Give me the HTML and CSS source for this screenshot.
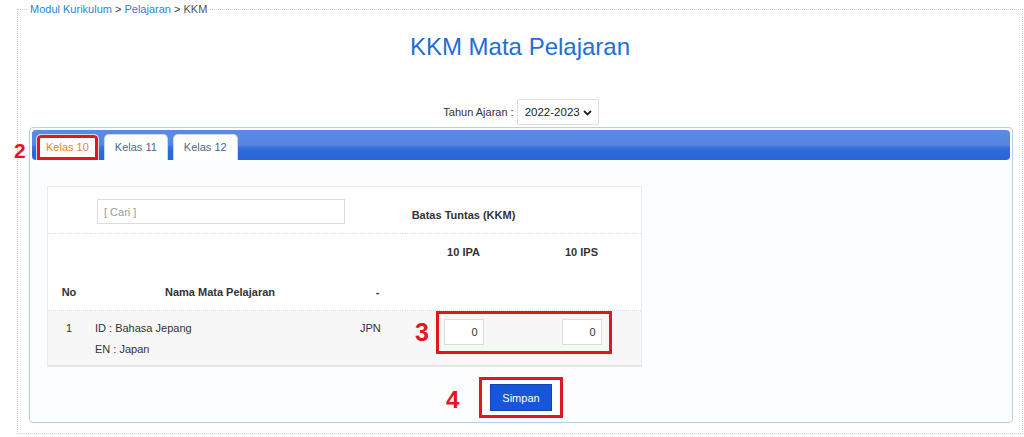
FILE: index.html
```html
<!DOCTYPE html>
<html lang="id">
<head>
<meta charset="utf-8">
<title>KKM Mata Pelajaran</title>
<link rel="stylesheet" href="styles.css">
</head>
<body>
<fieldset class="frame">
  <legend class="crumbs"><a class="link">Modul Kurikulum</a> &gt; <a class="link">Pelajaran</a> &gt; <span class="cur">KKM</span></legend>
  <h1 class="title">KKM Mata Pelajaran</h1>
  <div class="year-row">
    <label class="year-label">Tahun Ajaran :</label>
    <div class="select-wrap">
      <select class="year"><option>2022-2023</option></select>
      <svg class="chev" width="9" height="6" viewBox="0 0 9 6"><path d="M1 1 L4.5 4.5 L8 1" fill="none" stroke="#222" stroke-width="1.8"/></svg>
    </div>
  </div>
  <div class="tabs">
    <div class="tabbar">
      <span class="tab active hl">Kelas 10</span>
      <span class="tab">Kelas 11</span>
      <span class="tab">Kelas 12</span>
    </div>
    <span class="anno anno-2">2</span>
    <div class="panel">
      <div class="grid-wrap">
        <table class="grid">
          <colgroup><col class="c1"><col class="c2"><col class="c3"><col class="c4"><col class="c5"></colgroup>
          <tr class="r1">
            <td></td>
            <td><input class="search" type="text" placeholder="[ Cari ]"></td>
            <td></td>
            <td class="th kkm">Batas Tuntas (KKM)</td>
            <td></td>
          </tr>
          <tr class="r2">
            <td></td><td></td><td></td>
            <td class="th center">10 IPA</td>
            <td class="th center">10 IPS</td>
          </tr>
          <tr class="r3">
            <td class="th center">No</td>
            <td class="th center">Nama Mata Pelajaran</td>
            <td class="th center dash">-</td>
            <td></td><td></td>
          </tr>
          <tr class="r4">
            <td class="center">1</td>
            <td class="name">ID : Bahasa Jepang<br>EN : Japan</td>
            <td class="code">JPN</td>
            <td class="center"><input class="score" type="text" value="0"></td>
            <td class="center"><input class="score" type="text" value="0"></td>
          </tr>
        </table>
        <div class="hl-box"></div>
        <span class="anno anno-3">3</span>
      </div>
      <div class="actions">
        <div class="btn-box">
          <span class="anno anno-4">4</span>
          <button class="btn" type="button">Simpan</button>
        </div>
      </div>
    </div>
  </div>
</fieldset>
</body>
</html>
```
FILE: styles.css
```css
html, body {
  margin: 0;
  padding: 0;
  background: #ffffff;
}
body {
  font-family: "Liberation Sans", Arial, sans-serif;
  font-size: 11px;
  color: #333;
}
.frame {
  margin: 3px 1px 0 17px;
  padding: 0 0 10px 0;
  border: 1px dotted #cfcfcf;
  min-inline-size: 0;
}
.crumbs {
  margin-left: 9px;
  padding: 0 3px 0 3px;
  font-size: 11px;
  line-height: 13px;
}
.crumbs .link {
  color: #2f7fdc;
  text-decoration: none;
}
.crumbs .cur {
  color: #555;
}
.title {
  margin: 17px 0 0 0;
  text-align: center;
  font-weight: normal;
  font-size: 24px;
  line-height: 28px;
  color: #1c6fd3;
}
.year-row {
  margin-top: 38px;
  display: flex;
  justify-content: center;
  align-items: center;
  gap: 3px;
  height: 26px;
  padding-left: 2px;
}
.year-label {
  color: #333;
  font-size: 11px;
}
.select-wrap {
  position: relative;
  width: 82px;
  height: 26px;
}
.year {
  appearance: none;
  -webkit-appearance: none;
  width: 82px;
  height: 26px;
  box-sizing: border-box;
  border: 1px solid #dedede;
  border-radius: 2px;
  background: #fff;
  padding: 0 0 0 7px;
  font-family: "Liberation Sans", Arial, sans-serif;
  font-size: 11.5px;
  color: #222;
}
.chev {
  position: absolute;
  right: 7px;
  top: 11px;
  pointer-events: none;
}
.tabs {
  position: relative;
  margin: 2px 9px 0 11px;
  border: 1px solid #b3d3ec;
  border-radius: 4px;
  padding: 2px;
  background: #fcfdfe;
}
.tabbar {
  height: 30px;
  box-sizing: border-box;
  padding: 4px 0 0 4px;
  display: flex;
  gap: 5px;
  border-radius: 4px;
  background: linear-gradient(#5b8ae2 0%, #5686e1 50%, #3d75dc 56%, #2e69d9 70%, #2b66d8 100%);
}
.tab {
  height: 26px;
  box-sizing: border-box;
  padding: 0 10px;
  line-height: 25px;
  background: #fff;
  border: 1px solid #c9dcef;
  border-bottom: 0;
  border-radius: 5px 5px 0 0;
  color: #4d6784;
  font-size: 11px;
  white-space: nowrap;
}
.tab.active {
  color: #e8842f;
  padding: 0 9px;
}
.tab.hl {
  box-shadow: inset 0 0 0 3px #e3161f;
}
.anno {
  position: absolute;
  font-family: "Liberation Sans", Arial, sans-serif;
  font-weight: bold;
  color: #e3161f;
}
.anno-2 {
  left: -16px;
  top: 12px;
  font-size: 21px;
  line-height: 21px;
}
.panel {
  padding: 26px 15px 2px 15px;
}
.grid-wrap {
  position: relative;
  width: 595px;
  box-sizing: border-box;
  border: 1px solid #ececec;
  border-bottom: 2px solid #e8e8e8;
  background: #fff;
}
.grid {
  width: 593px;
  table-layout: fixed;
  border-collapse: separate;
  border-spacing: 0;
}
.c1 { width: 42px; }
.c2 { width: 260px; }
.c3 { width: 55px; }
.c4 { width: 117px; }
.c5 { width: 119px; }
.grid td {
  padding: 0;
  vertical-align: top;
  box-sizing: border-box;
  line-height: 13px;
  font-size: 11px;
  color: #333;
}
.grid .th {
  font-weight: bold;
  color: #333;
}
.grid .center {
  text-align: center;
}
.grid .kkm {
  text-align: center;
  white-space: nowrap;
}
.r1 td {
  height: 47px;
  padding-top: 12px;
  border-bottom: 1px dotted #dcdcdc;
}
.r1 td.kkm {
  padding-top: 22px;
}
.r2 td {
  height: 38px;
  padding-top: 12px;
}
.r3 td {
  height: 39px;
  padding-top: 14px;
  border-bottom: 1px dotted #dcdcdc;
}
.r4 td {
  height: 54px;
  padding-top: 7px;
  line-height: 21px;
  background: #f7f7f7;
}
.r4 td.name {
  padding-left: 5px;
}
.r4 td.code {
  padding-left: 10px;
}
.search {
  display: block;
  margin-left: 7px;
  width: 248px;
  height: 25px;
  box-sizing: border-box;
  border: 1px solid #dddddd;
  background: #fff;
  padding: 0 6px;
  font-family: "Liberation Sans", Arial, sans-serif;
  font-size: 11px;
  color: #333;
  outline: none;
}
.search::placeholder {
  color: #9a9a9a;
}
.r4 td .score {
  display: inline-block;
  margin-top: 1px;
  width: 40px;
  height: 26px;
  box-sizing: border-box;
  border: 1px solid #dddddd;
  background: #fff;
  padding: 0 5px 0 0;
  text-align: right;
  font-family: "Liberation Sans", Arial, sans-serif;
  font-size: 11px;
  color: #333;
  vertical-align: top;
}
.hl-box {
  position: absolute;
  left: 388px;
  top: 124px;
  width: 176px;
  height: 43px;
  box-sizing: border-box;
  border: 3px solid #e3161f;
}
.anno-3 {
  left: 367px;
  top: 133px;
  font-size: 25px;
  line-height: 25px;
}
.actions {
  margin-top: 10px;
  display: flex;
  justify-content: center;
}
.btn-box {
  position: relative;
  border: 3px solid #e3161f;
  padding: 4px 8px;
}
.anno-4 {
  left: -36px;
  top: 8px;
  font-size: 24px;
  line-height: 24px;
}
.btn {
  display: block;
  width: 62px;
  height: 27px;
  box-sizing: border-box;
  border: 1px solid #0f44b4;
  background: #1756d8;
  color: #fff;
  font-family: "Liberation Sans", Arial, sans-serif;
  font-size: 11px;
  padding: 0;
}
```
